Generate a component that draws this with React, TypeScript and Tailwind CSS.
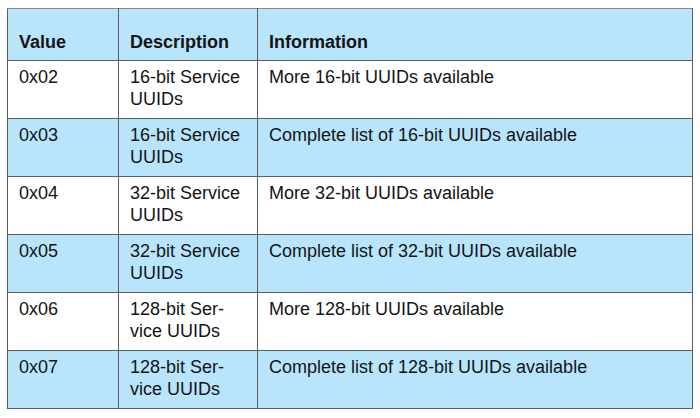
import React from 'react';

const rows = [
  {value: '0x02', desc: ['16-bit Service', 'UUIDs'], info: 'More 16-bit UUIDs available'},
  {value: '0x03', desc: ['16-bit Service', 'UUIDs'], info: 'Complete list of 16-bit UUIDs available'},
  {value: '0x04', desc: ['32-bit Service', 'UUIDs'], info: 'More 32-bit UUIDs available'},
  {value: '0x05', desc: ['32-bit Service', 'UUIDs'], info: 'Complete list of 32-bit UUIDs available'},
  {value: '0x06', desc: ['128-bit Ser-', 'vice UUIDs'], info: 'More 128-bit UUIDs available'},
  {value: '0x07', desc: ['128-bit Ser-', 'vice UUIDs'], info: 'Complete list of 128-bit UUIDs available'},
];

const cell = 'border border-[#5c5c5c] px-[11px] align-top';

export default function App() {
  return (
    <div className="w-[700px] h-[418px] bg-white pl-[7px] pt-[8px] text-[#141414]"
      style={{fontFamily: '"Liberation Sans", Arial, sans-serif'}}>
      <table className="table-fixed border-collapse w-[685px] text-[18px] leading-[22px]">
        <colgroup>
          <col className="w-[111px]" />
          <col className="w-[139px]" />
          <col className="w-[435px]" />
        </colgroup>
        <thead>
          <tr className="bg-[#b8e5fc] h-[52px]">
            <th className={`${cell} text-left font-bold pt-[22px] border-t-[#8a8a8a]`}>Value</th>
            <th className={`${cell} text-left font-bold pt-[22px] border-t-[#8a8a8a]`}>Description</th>
            <th className={`${cell} text-left font-bold pt-[22px] border-t-[#8a8a8a]`}>Information</th>
          </tr>
        </thead>
        <tbody>
          {rows.map((r, idx) => (
            <tr key={r.value} className={`h-[58px] ${idx % 2 ? 'bg-[#b8e5fc]' : 'bg-white'}`}>
              <td className={`${cell} pt-[5px]`}>{r.value}</td>
              <td className={`${cell} pt-[5px]`}>
                {r.desc[0]}
                <br />
                {r.desc[1]}
              </td>
              <td className={`${cell} pt-[5px]`}>{r.info}</td>
            </tr>
          ))}
        </tbody>
      </table>
    </div>
  );
}
